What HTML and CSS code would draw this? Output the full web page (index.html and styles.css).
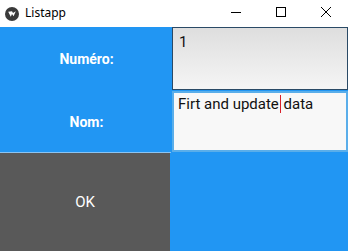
FILE: index.html
```html
<!DOCTYPE html>
<html lang="en">

<head>
    <meta charset="UTF-8">
    <meta name="viewport" content="width=device-width, initial-scale=1.0">
    <link rel="stylesheet" href="styles.css">
    <title>Listapp</title>
</head>

<body>
    <div class="window">
        <div class="titlebar">
            <div class="app-icon">
                <svg width="14" height="14" viewBox="0 0 14 14">
                    <circle cx="7" cy="7" r="7" fill="#3a3a3a"/>
                    <path d="M3.2 4.8 L5.8 9.8 L7 7 L8.6 9.2 L10.8 4.2 L8 5.9 L7 4.3 Z" fill="#ffffff"/>
                </svg>
            </div>
            <span class="app-title">Listapp</span>
            <div class="controls">
                <span class="ctrl">
                    <svg width="10" height="10" viewBox="0 0 10 10"><path d="M0 5.5 H10" stroke="#000" stroke-width="1"/></svg>
                </span>
                <span class="ctrl">
                    <svg width="10" height="10" viewBox="0 0 10 10"><rect x="0.5" y="0.5" width="9" height="9" fill="none" stroke="#000" stroke-width="1"/></svg>
                </span>
                <span class="ctrl">
                    <svg width="10" height="10" viewBox="0 0 10 10"><path d="M0 0 L10 10 M10 0 L0 10" stroke="#000" stroke-width="1"/></svg>
                </span>
            </div>
        </div>

        <div class="form">
            <div class="label">Numéro:</div>
            <div class="field field-number">1</div>
            <div class="label label-last">Nom:</div>
            <div class="field field-name">Firt and update<span class="cursor"></span> data</div>
            <div class="ok-button">OK</div>
            <div class="empty"></div>
        </div>
    </div>
</body>

</html>
```

FILE: styles.css
```css
body {
  margin: 0;
  width: 348px;
  height: 251px;
  overflow: hidden;
}

.window {
  display: flex;
  flex-direction: column;
  height: 251px;
  font-family: Roboto, "Noto Sans", sans-serif;
}

.titlebar {
  height: 27px;
  background: #ffffff;
  display: flex;
  align-items: center;
  font-family: "Segoe UI", "Noto Sans", sans-serif;
}

.app-icon {
  width: 14px;
  height: 14px;
  margin-left: 5px;
  display: flex;
}

.app-title {
  margin-left: 6px;
  margin-top: -2px;
  font-size: 12px;
  color: #000000;
}

.controls {
  margin-left: auto;
  display: flex;
  height: 100%;
}

.ctrl {
  width: 45px;
  display: flex;
  align-items: center;
  justify-content: center;
  margin-top: -3px;
}

.form {
  flex: 1;
  display: grid;
  grid-template-columns: 171px 1fr;
  grid-template-rows: 63px 63px 1fr;
  background: #2196f3;
}

.label {
  display: flex;
  align-items: center;
  justify-content: center;
  color: #ffffff;
  font-weight: bold;
  font-size: 14px;
  padding-left: 2px;
}

.label-last {
  border-bottom: 1px solid #8cc4f2;
  padding-top: 2px;
}

.field {
  margin-left: 1px;
  padding: 5px 6px;
  font-size: 15px;
  color: #111111;
  line-height: 19px;
}

.field-number {
  border: 1px solid #2a4a66;
  background: linear-gradient(#dedede, #f5f5f5);
}

.field-name {
  margin-top: 1px;
  margin-bottom: 1px;
  border: 2px solid #5aaeea;
  background: #f8f8f8;
  padding: 2px 4px;
}

.cursor {
  display: inline-block;
  width: 1px;
  height: 18px;
  background: #d8202a;
  vertical-align: -4px;
  margin-left: 1px;
  margin-right: -1px;
}

.ok-button {
  background: #595959;
  color: #ffffff;
  font-size: 15px;
  display: flex;
  align-items: center;
  justify-content: center;
  margin-right: 1px;
}
```
